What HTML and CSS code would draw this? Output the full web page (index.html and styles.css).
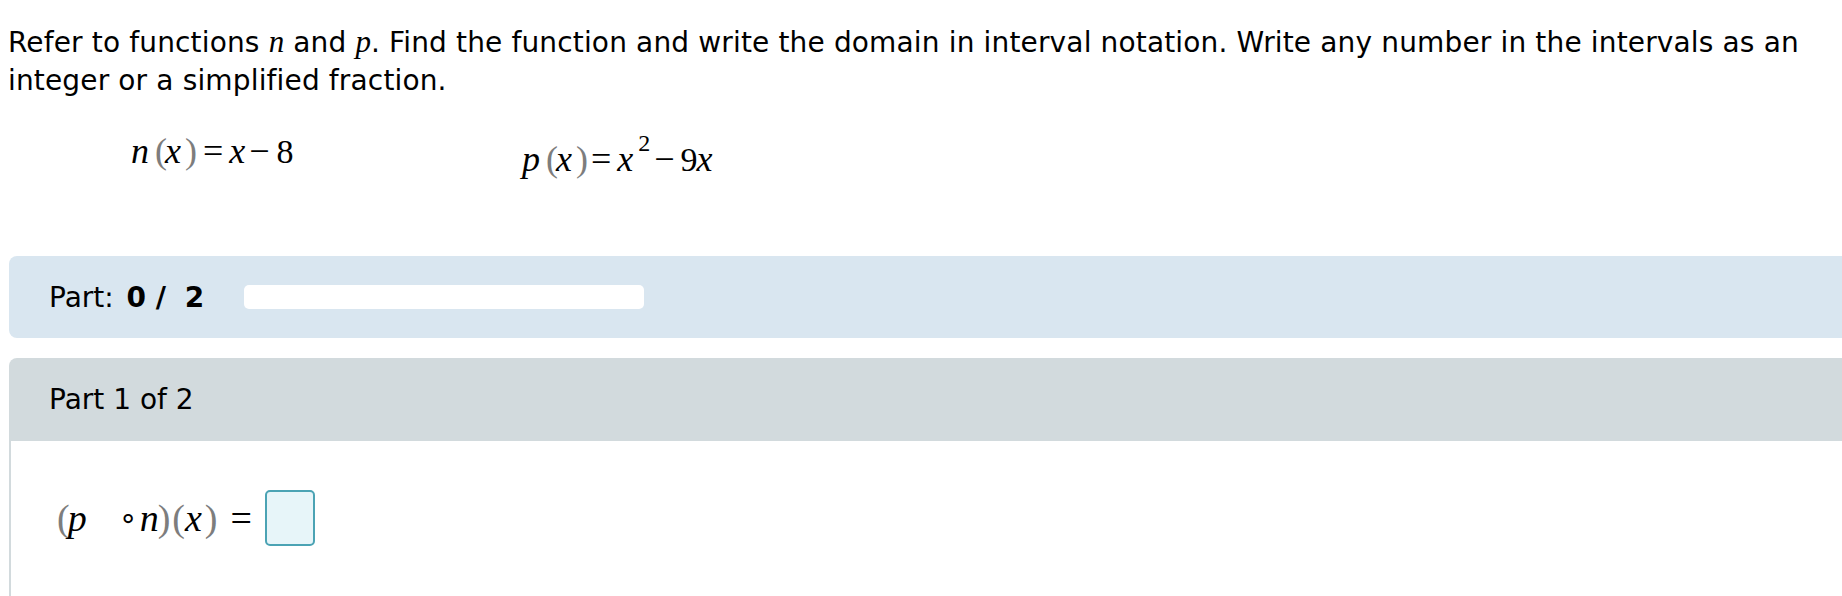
FILE: index.html
```html
<!DOCTYPE html>
<html>
<head>
<meta charset="utf-8">
<link rel="stylesheet" href="styles.css">
</head>
<body>
<div class="page">
  <p class="question">Refer to functions <span class="mv">n</span> and <span class="mv">p</span>. Find the function and write the domain in interval notation. Write any number in the intervals as an integer or a simplified fraction.</p>

  <div class="defs">
    <div class="def def-n math"><span class="v">n</span><span class="par m6">(</span><span class="v mneg2">x</span><span class="par m4">)</span><span class="op m6">=</span><span class="v m6">x</span><span class="op m4">−</span><span class="num m7">8</span></div>
    <div class="def def-p math"><span class="v">p</span><span class="par m6">(</span><span class="v mneg2">x</span><span class="par m4">)</span><span class="op m3">=</span><span class="v m6">x</span><span class="sup">2</span><span class="op m4">−</span><span class="num m6">9</span><span class="v mneg1">x</span></div>
  </div>

  <div class="progress-bar">
    <span class="part-label">Part: <b>0 / <span class="den">2</span></b></span>
    <span class="progress-track"></span>
  </div>

  <div class="part-header">Part 1 of 2</div>
  <div class="part-body">
    <div class="answer-row">
      <span class="expr"><span class="apar">(</span><span class="av ap">p</span><span class="compose">∘</span><span class="av an">n</span><span class="apar ar1">)</span><span class="apar al2">(</span><span class="av ax">x</span><span class="apar ar2">)</span><span class="aeq">=</span></span><span class="answer-box"></span>
    </div>
  </div>
</div>
</body>
</html>
```

FILE: styles.css
```css
html, body {
  margin: 0;
  padding: 0;
  background: #fff;
  overflow: hidden;
}

body {
  font-family: "DejaVu Sans", Verdana, sans-serif;
  font-size: 28px;
  color: #000;
}

.page {
  padding: 23px 0 0 8px;
}

.question {
  margin: 0;
  line-height: 38px;
  letter-spacing: 0.15px;
  padding-right: 30px;
}

.mv {
  font-family: "Liberation Serif", serif;
  font-style: italic;
  font-size: 31px;
  letter-spacing: 0;
}

/* top definitions */
.defs {
  display: flex;
  align-items: flex-start;
  height: 125px;
  margin-top: 31px;
  padding-left: 123px;
}

.math {
  font-family: "Liberation Serif", "Times New Roman", serif;
  font-size: 36px;
  line-height: 40px;
  white-space: nowrap;
}

.def-n {
  width: 391px;
}

.def-p {
  margin-top: 8px;
}

.v {
  font-style: italic;
}

.par {
  color: #7d7d7d;
}

.num {
  font-size: 34px;
}

.m3 { margin-left: 3px; }
.m4 { margin-left: 4px; }
.m6 { margin-left: 6px; }
.m7 { margin-left: 7px; }
.m8 { margin-left: 8px; }
.mneg1 { margin-left: -1px; }
.mneg2 { margin-left: -2px; }

.sup {
  font-size: 24px;
  line-height: 0;
  vertical-align: 20px;
  margin-left: 5px;
}

/* progress bar */
.progress-bar {
  display: flex;
  align-items: center;
  height: 82px;
  margin-left: 1px;
  padding-left: 40px;
  background: #d9e6f0;
  border-radius: 8px 0 0 8px;
}

.part-label b {
  font-weight: bold;
  margin-left: 4px;
}

.den {
  margin-left: 9px;
}

.progress-track {
  display: block;
  width: 400px;
  height: 24px;
  margin-left: 40px;
  background: #fff;
  border-radius: 5px;
}

/* part */
.part-header {
  display: flex;
  align-items: center;
  height: 83px;
  margin-top: 20px;
  margin-left: 1px;
  padding-left: 40px;
  background: #d2dadd;
  border-radius: 8px 0 0 0;
}

.part-body {
  margin-left: 1px;
  border-left: 2px solid #d2dadd;
  height: 107px;
  padding-top: 49px;
  padding-left: 46px;
}

.answer-row {
  display: flex;
  align-items: center;
  height: 56px;
}

.expr {
  font-family: "Liberation Serif", "Times New Roman", serif;
  font-size: 38px;
  line-height: 44px;
  white-space: nowrap;
}

.apar {
  color: #7d7d7d;
}

.av {
  font-style: italic;
}

.ap { margin-left: -2px; }

.compose {
  display: inline-block;
  width: 16px;
  margin-left: 32px;
  text-align: center;
  font-family: "DejaVu Sans", sans-serif;
  font-size: 30px;
  vertical-align: 3px;
}

.an { margin-left: 5px; }
.ar1 { margin-left: -1px; }
.al2 { margin-left: 2px; }
.ax { margin-left: 0; }
.ar2 { margin-left: 3px; }

.aeq {
  margin-left: 13px;
}

.answer-box {
  display: block;
  width: 46px;
  height: 52px;
  margin-left: 13px;
  background: #e7f5f9;
  border: 2px solid #4ba3b4;
  border-radius: 5px;
}
```
